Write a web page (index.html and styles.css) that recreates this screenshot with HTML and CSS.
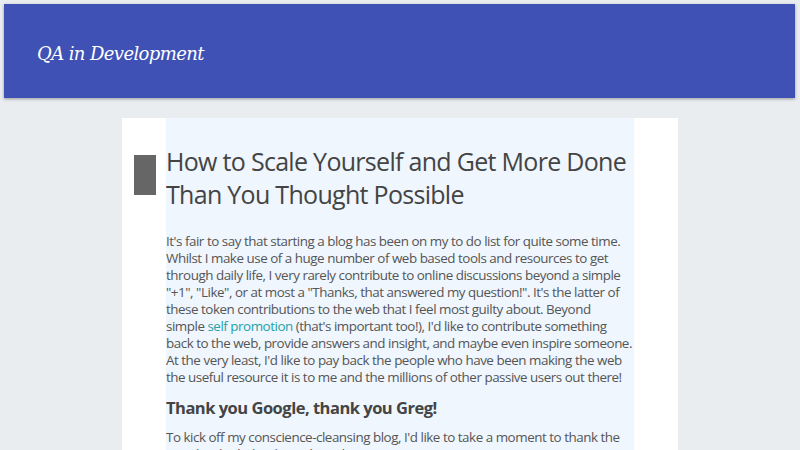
FILE: index.html
```html
<!DOCTYPE html>
<html>
<head>
<meta charset="utf-8">
<link rel="stylesheet" href="styles.css">
</head>
<body>
<header class="site-header">
  <div class="site-title">QA in Development</div>
</header>
<main class="card">
  <div class="card-inner">
    <div class="marker-col"><div class="marker"></div></div>
    <article class="post">
      <h1 class="post-title">How to Scale Yourself and Get More Done Than You Thought Possible</h1>
      <p>It's fair to say that starting a blog has been on my to do list for quite some time. Whilst I make use of a huge number of web based tools and resources to get through daily life, I very rarely contribute to online discussions beyond a simple "+1", "Like", or at most a "Thanks, that answered my question!". It's the latter of these token contributions to the web that I feel most guilty about. Beyond<br>simple <a href="#">self promotion</a> (that's important too!), I'd like to contribute something back to the web, provide answers and insight, and maybe even inspire someone. At the very least, I'd like to pay back the people who have been making the web the useful resource it is to me and the millions of other passive users out there!</p>
      <h2>Thank you Google, thank you Greg!</h2>
      <p>To kick off my conscience-cleansing blog, I'd like to take a moment to thank the people who helped me along the way.</p>
    </article>
    <div class="right-col"></div>
  </div>
</main>
</body>
</html>
```
FILE: styles.css
```css
html, body {
  margin: 0;
  padding: 0;
}
body {
  background: #eaedf0;
  padding: 4px 5px 0 4px;
  font-family: "Open Sans", "Liberation Sans", sans-serif;
  overflow: hidden;
  height: 446px;
}
.site-header {
  background: #3f51b5;
  height: 94px;
  box-shadow: 0 1px 3px rgba(0,0,0,0.35);
  display: flex;
  align-items: center;
  padding-left: 33px;
}
.site-title {
  font-family: "DejaVu Serif", "Liberation Serif", serif;
  font-style: italic;
  font-size: 18px;
  letter-spacing: -0.6px;
  color: #ffffff;
  margin-top: 4px;
}
.card {
  width: 556px;
  margin: 20px auto 0 118px;
  background: #ffffff;
}
.card-inner {
  display: flex;
}
.marker-col {
  width: 44px;
  padding: 37px 0 0 12px;
  box-sizing: border-box;
}
.marker {
  width: 22px;
  height: 40px;
  background: #666666;
}
.post {
  width: 468px;
  background: #eff6fd;
  padding-top: 27px;
  color: #555555;
}
.right-col {
  flex: 1;
}
.post-title {
  font-weight: 400;
  font-size: 25px;
  letter-spacing: -0.7px;
  line-height: 33px;
  color: #444444;
  margin: 0 0 22px 0;
}
.post p {
  font-size: 13.4px;
  letter-spacing: -0.47px;
  line-height: 17px;
  margin: 0 0 10px 0;
}
.post a {
  color: #26a0a8;
  text-decoration: none;
}
.post h2 {
  font-size: 16.5px;
  font-weight: 700;
  letter-spacing: -0.5px;
  color: #444444;
  margin: 0 0 9px 0;
  line-height: 24px;
}
```
